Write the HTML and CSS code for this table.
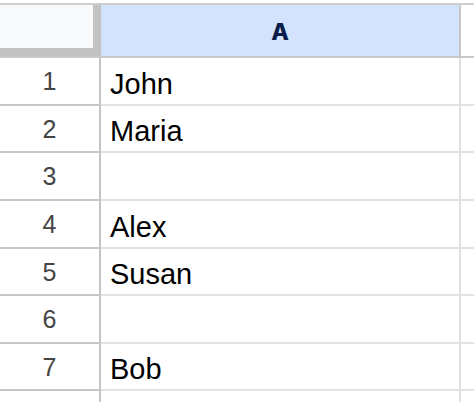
FILE: index.html
```html
<!DOCTYPE html>
<html>
<head>
<meta charset="utf-8">
<link rel="stylesheet" href="styles.css">
</head>
<body>
<div class="sheet">
  <div class="row hdr">
    <div class="corner"></div>
    <div class="colhead">A</div>
    <div class="rest"></div>
  </div>
  <div class="row r48"><div class="num">1</div><div class="cell">John</div><div class="rest"></div></div>
  <div class="row r47"><div class="num">2</div><div class="cell">Maria</div><div class="rest"></div></div>
  <div class="row r48"><div class="num">3</div><div class="cell"></div><div class="rest"></div></div>
  <div class="row r48"><div class="num">4</div><div class="cell">Alex</div><div class="rest"></div></div>
  <div class="row r47"><div class="num">5</div><div class="cell">Susan</div><div class="rest"></div></div>
  <div class="row r48"><div class="num">6</div><div class="cell"></div><div class="rest"></div></div>
  <div class="row r47"><div class="num">7</div><div class="cell">Bob</div><div class="rest"></div></div>
  <div class="row r48"><div class="num"></div><div class="cell"></div><div class="rest"></div></div>
</div>
</body>
</html>
```
FILE: styles.css
```css
* { box-sizing: border-box; }
html, body { margin: 0; padding: 0; background: #fff; }
body { width: 474px; height: 402px; overflow: hidden; font-family: "Liberation Sans", Arial, sans-serif; }
.sheet { margin-top: 3px; border-top: 2px solid #cfcfcf; }
.row { display: flex; }
.hdr { height: 53px; border-bottom: 2px solid #c9c9c9; }
.corner { width: 101px; height: 51px; background: #f8f9fa; border-right: 8px solid #c2c2c2; border-bottom: 8px solid #c2c2c2; }
.colhead { width: 360px; background: #d3e3fd; border-right: 2px solid #c7c7c7; display: flex; align-items: center; justify-content: center; padding-top: 3px; font-family: Inter, "Open Sans", sans-serif; font-weight: 800; font-size: 23px; color: #0a1d4a; }
.rest { flex: 1; border-bottom: 2px solid #e2e2e2; }
.hdr .rest { border-bottom: none; }
.r48 { height: 48px; }
.r47 { height: 47px; }
.num { width: 101px; border-right: 2px solid #c4c4c4; border-bottom: 2px solid #c6c6c6; display: flex; align-items: center; justify-content: center; padding-top: 1px; font-size: 25px; color: #444; }
.cell { width: 360px; border-right: 2px solid #e0e0e0; border-bottom: 2px solid #e2e2e2; display: flex; align-items: flex-end; padding: 0 0 3px 9px; font-size: 29px; color: #000; }
```
